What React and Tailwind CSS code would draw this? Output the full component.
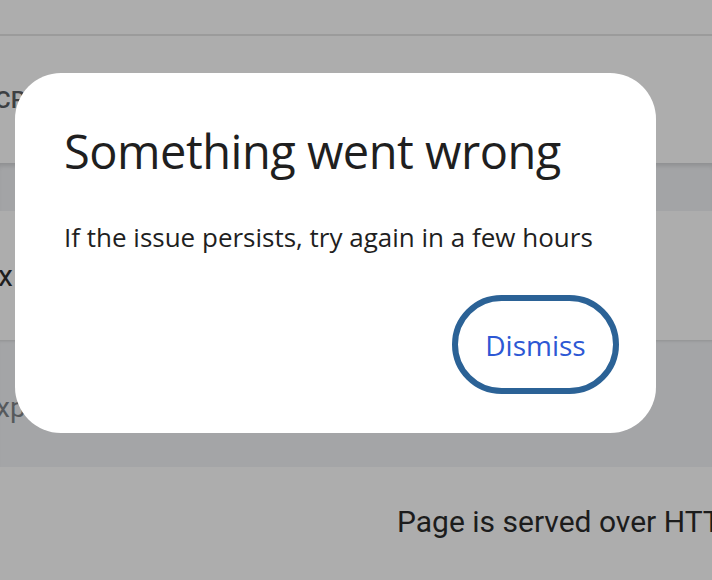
import React from 'react'

const App = () => {
  return (
    <div className="relative w-[712px] h-[580px] overflow-hidden bg-[#adadad]" style={{ fontFamily: 'Roboto, "Liberation Sans", sans-serif' }}>
      {/* page behind the scrim */}
      <div className="h-[34px] bg-[#adadad]" />
      <div className="h-[2px] bg-[#9b9b9b]" />
      <div className="h-[127px] bg-[#adadad] flex items-center">
        <span className="-ml-[5px] text-[24px] font-medium text-[#3d4043]">CR</span>
      </div>
      <div className="h-[48px] bg-[#a3a4a6] shadow-[inset_0_5px_4px_-2px_rgba(0,0,0,0.12)]" />
      <div className="h-[129px] bg-[#adadad] flex items-center">
        <span className="-ml-[2px] text-[30px] text-[#1e1e1e]">x</span>
      </div>
      <div className="h-[127px] bg-[#a4a5a7] shadow-[inset_0_3px_3px_-2px_rgba(0,0,0,0.12)] flex items-end pb-[38px]">
        <span className="-ml-[4px] text-[28px] text-[#56595c]">xpe</span>
      </div>
      <div className="h-[113px] bg-[#adadad] flex items-center pl-[397px] pb-[4px]">
        <span className="whitespace-nowrap text-[30px] text-[#1c1c1c]">Page is served over HTTPS</span>
      </div>

      {/* dialog */}
      <div
        className="absolute left-[15px] top-[73px] w-[641px] h-[360px] rounded-[46px] bg-white flex flex-col pl-[49px] pr-[37px] pt-[50px] pb-[39px]"
        style={{ fontFamily: '"Open Sans", Roboto, sans-serif' }}
      >
        <h2 className="text-[47px] leading-[56px] text-[#1f1f1f] tracking-[-0.5px] whitespace-nowrap">Something went wrong</h2>
        <p className="mt-[42px] text-[26px] leading-[32px] text-[#1f1f1f] whitespace-nowrap">If the issue persists, try again in a few hours</p>
        <div className="mt-auto flex justify-end">
          <button className="w-[167px] h-[99px] rounded-full border-[6px] border-[#2b6296] text-[#2d58d4] text-[28px] font-medium">
            Dismiss
          </button>
        </div>
      </div>
    </div>
  )
}

export default App
